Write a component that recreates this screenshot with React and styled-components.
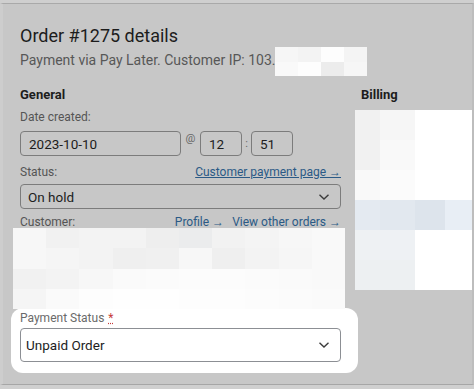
import React from 'react';
import styled, { createGlobalStyle } from 'styled-components';

const Global = createGlobalStyle`
  html, body {
    margin: 0;
    padding: 0;
    background: #c7c7c7;
  }
  body {
    font-family: Roboto, "Liberation Sans", sans-serif;
    color: #1d1d1d;
  }
`;

const Frame = styled.div`
  width: 474px;
  height: 389px;
  overflow: hidden;
  box-sizing: border-box;
  border-top: 3px solid #cfcfcf;
  display: flex;
  flex-direction: column;
`;

const Panel = styled.div`
  flex: 1;
  border-top: 1px solid #a9a9a9;
  border-bottom: 1px solid #a6a6a6;
  border-left: 3px solid #cdcdcd;
  border-right: 2px solid #bdbdbd;
  padding: 20px 0 0 17px;
  overflow: hidden;
`;

const Footer = styled.div`
  height: 4px;
  background: #cfcfcf;
`;

const Title = styled.h2`
  margin: 0;
  font-size: 18px;
  font-weight: 400;
  line-height: 24px;
  color: #1c1c1c;
`;

const Sub = styled.div`
  display: flex;
  align-items: flex-start;
  height: 18px;
  margin-top: 3px;
  font-size: 14px;
  line-height: 18px;
  color: #575757;
`;

const Columns = styled.div`
  display: flex;
  margin-top: 17px;
`;

const Left = styled.div`
  width: 321px;
  display: flex;
  flex-direction: column;
`;

const Right = styled.div`
  margin-left: 14px;
  flex: 1;
  display: flex;
  flex-direction: column;
`;

const Heading = styled.h3`
  margin: 0;
  font-size: 13px;
  font-weight: 700;
  line-height: 18px;
  color: #1d1d1d;
  padding-left: ${p => p.$indent || 0}px;
`;

const LabelRow = styled.div`
  display: flex;
  justify-content: space-between;
  align-items: baseline;
  margin-top: ${p => p.$top || 0}px;
  font-size: 12px;
  line-height: 16px;
  color: #555;
`;

const Links = styled.div`
  display: flex;
  gap: 8px;
`;

const Link = styled.a`
  color: #2b5a86;
  text-decoration: ${p => (p.$under ? 'underline' : 'none')};
  font-size: 12px;
`;

const DateRow = styled.div`
  display: flex;
  align-items: center;
  margin-top: 6px;
  font-size: 11px;
  color: #666;
`;

const Field = styled.div`
  box-sizing: border-box;
  width: ${p => p.$w}px;
  height: 25px;
  border: 1px solid #7c7c7c;
  border-radius: 4px;
  padding: 0 8px;
  display: flex;
  align-items: center;
  font-size: 13.5px;
  color: #1d1d1d;
`;

const Sep = styled.span`
  width: ${p => p.$w}px;
  text-align: center;
  align-self: ${p => (p.$top ? 'flex-start' : 'center')};
  margin-top: ${p => (p.$top ? 1 : 0)}px;
`;

const Select = styled.div`
  box-sizing: border-box;
  height: ${p => p.$h || 25}px;
  margin-top: ${p => p.$top || 0}px;
  border: 1px solid ${p => (p.$light ? '#8c8f94' : '#7c7c7c')};
  border-radius: 4px;
  background: ${p => (p.$light ? '#fff' : 'transparent')};
  padding: 0 10px 0 ${p => (p.$light ? 5 : 7)}px;
  display: flex;
  align-items: center;
  justify-content: space-between;
  font-size: 13.5px;
  color: #1d1d1d;
`;

const Pixels = styled.div`
  display: grid;
  grid-template-columns: ${p => p.$cols};
  grid-auto-rows: ${p => p.$row}px;
  margin: ${p => p.$margin};
  position: relative;
  z-index: 1;
`;

const Cell = styled.div`
  background: ${p => p.$c};
`;

const Highlight = styled.div`
  background: #fff;
  border-radius: 12px;
  margin: -1px 0 0 -9px;
  width: 347px;
  box-sizing: border-box;
  padding: 2px 17px 11px 9px;
`;

const PayLabel = styled.div`
  font-size: 12px;
  line-height: 16px;
  color: #6a6a6a;
  & span {
    color: #c63a3a;
    margin-left: 4px;
    text-decoration: underline dotted;
  }
`;

const Chevron = () => (
  <svg width="12" height="8" viewBox="0 0 12 8" fill="none">
    <path d="M1.5 1.8 L6 6 L10.5 1.8" stroke="#3c3c3c" strokeWidth="1.4" />
  </svg>
);

const ipCells = [
  '#f6f6f6', '#f3f3f3', '#fdfdfd', '#f4f4f4',
  '#f9f9f9', '#fdfdfd', '#ececec', '#f6f6f6',
];

const customerCells = [
  '#f7f7f7', '#f1f1f1', '#f3f3f3', '#f3f3f3', '#eeeeee', '#ebeced', '#f2f2f2', '#f4f4f4', '#f7f7f7', '#f9f9f9',
  '#f7f7f7', '#f5f5f5', '#f3f3f3', '#efefef', '#f0f0f0', '#f7f7f7', '#efefef', '#f3f3f3', '#f6f6f6', '#f9f9f9',
  '#f1f1f1', '#f3f3f3', '#f7f7f7', '#fafafa', '#fbfbfb', '#fcfcfc', '#fcfcfc', '#fbfbfb', '#fafafa', '#f9f9f9',
  '#f5f5f5', '#fafafa', '#fdfdfd', '#fefefe', '#fefefe', '#fdfdfd', '#fdfdfd', '#fcfcfc', '#fbfbfb', '#fafafa',
];

const billingCells = [
  '#f1f1f1', '#f6f6f6', '#ffffff', '#ffffff',
  '#f1f1f1', '#f9f9f9', '#ffffff', '#ffffff',
  '#f9f9f9', '#fbfbfb', '#ffffff', '#ffffff',
  '#e4eaf1', '#e2e8ef', '#dde4ec', '#e8eef5',
  '#eef1f3', '#eef1f4', '#ffffff', '#ffffff',
  '#edf0f2', '#edf0f2', '#ffffff', '#ffffff',
];

export default function App() {
  return (
    <>
      <Global />
      <Frame>
        <Panel>
          <Title>Order #1275 details</Title>
          <Sub>
            Payment via Pay Later. Customer IP: 103.
            <Pixels $cols="repeat(4, 23px)" $row="14.5" $margin="-4px 0 0 0">
              {ipCells.map((c, i) => <Cell key={i} $c={c} />)}
            </Pixels>
          </Sub>
          <Columns>
            <Left>
              <Heading>General</Heading>
              <LabelRow $top={5}><span>Date created:</span></LabelRow>
              <DateRow>
                <Field $w={161}>2023-10-10</Field>
                <Sep $w={19} $top>@</Sep>
                <Field $w={42}>12</Field>
                <Sep $w={9}>:</Sep>
                <Field $w={42}>51</Field>
              </DateRow>
              <LabelRow $top={8}>
                <span>Status:</span>
                <Link $under>Customer payment page →</Link>
              </LabelRow>
              <Select $top={4}>
                On hold
                <Chevron />
              </Select>
              <LabelRow $top={5}>
                <span>Customer:</span>
                <Links>
                  <Link>Profile →</Link>
                  <Link>View other orders →</Link>
                </Links>
              </LabelRow>
              <Pixels $cols="repeat(10, 33.2px)" $row="20.25" $margin="-2px -4px 0 -7px">
                {customerCells.map((c, i) => <Cell key={i} $c={c} />)}
              </Pixels>
              <Highlight>
                <PayLabel>Payment Status<span>*</span></PayLabel>
                <Select $light $h={34} $top={2}>
                  Unpaid Order
                  <Chevron />
                </Select>
              </Highlight>
            </Left>
            <Right>
              <Heading $indent={6}>Billing</Heading>
              <Pixels $cols="25px 35px 30px 30px" $row="30" $margin="6px 0 0 0">
                {billingCells.map((c, i) => <Cell key={i} $c={c} />)}
              </Pixels>
            </Right>
          </Columns>
        </Panel>
        <Footer />
      </Frame>
    </>
  );
}
